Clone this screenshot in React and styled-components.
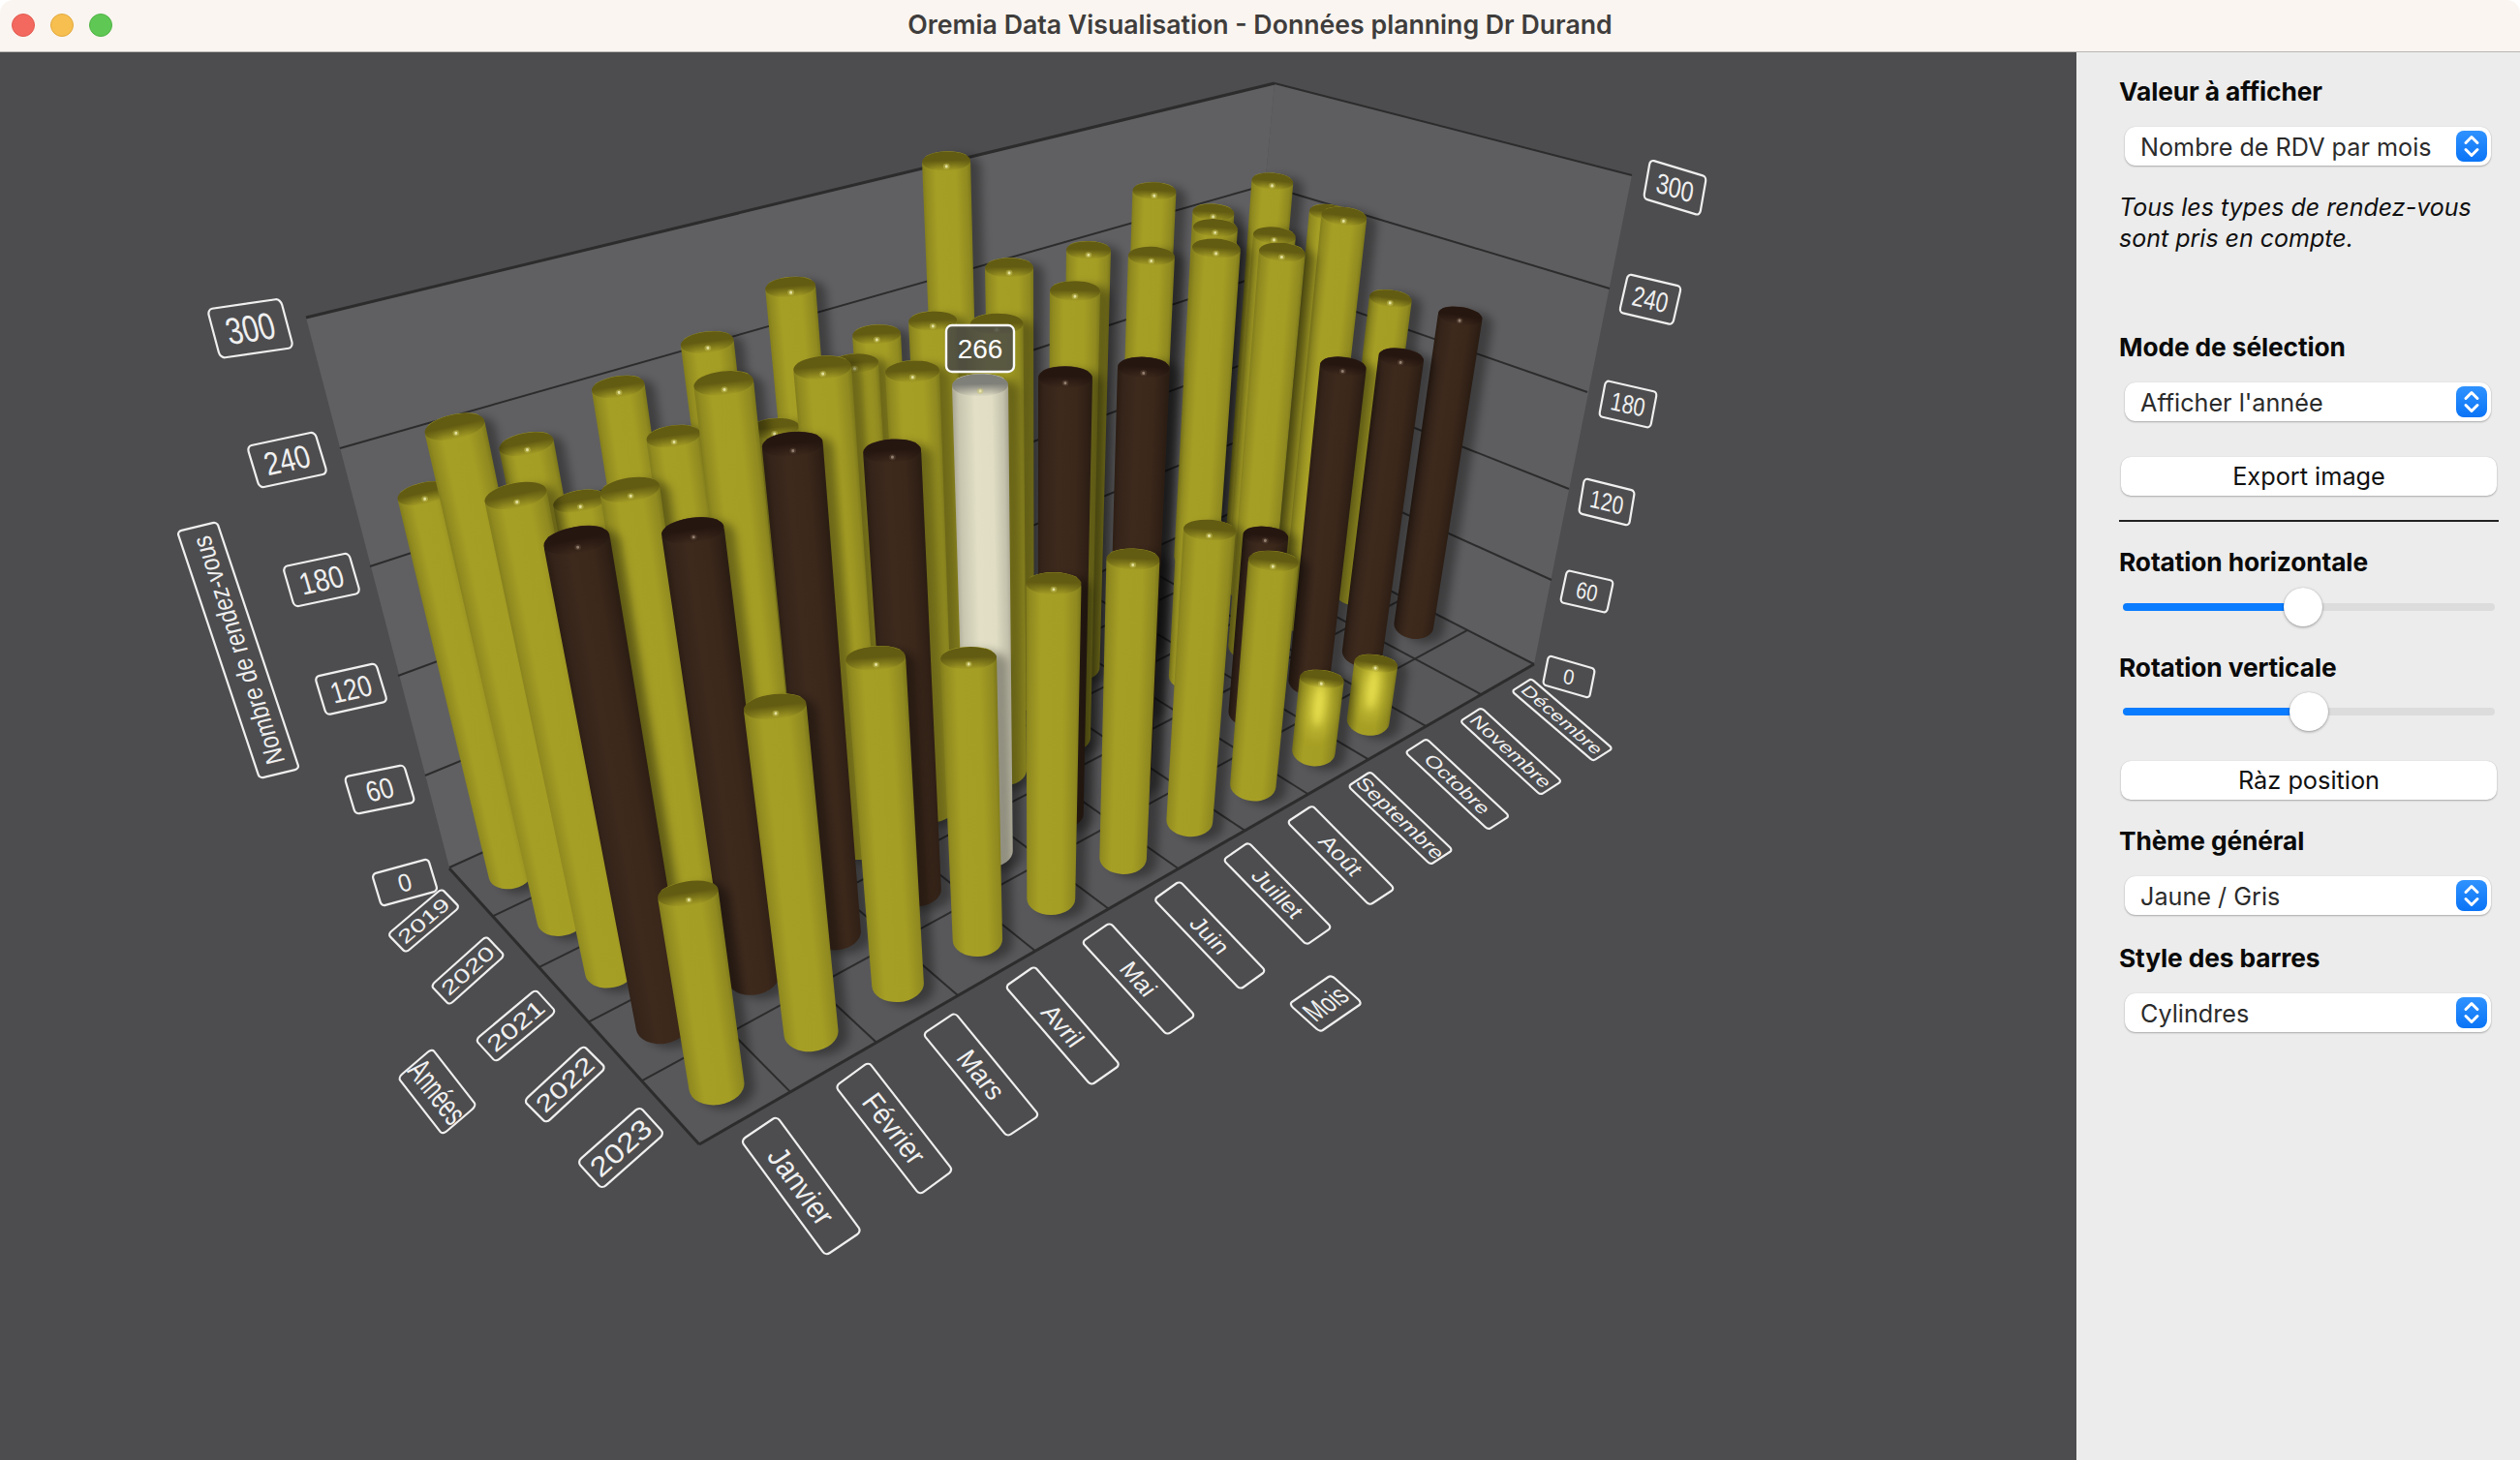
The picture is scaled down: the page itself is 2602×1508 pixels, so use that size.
import React from "react";
import styled, { createGlobalStyle } from "styled-components";

const Global = createGlobalStyle`
  html, body { margin: 0; padding: 0; background: #fff; }
  body { font-family: Inter, "Noto Sans", sans-serif; }
`;

const Window = styled.div`
  width: 2602px; height: 1508px; display: flex; flex-direction: column; overflow: hidden;
`;
const TitleBar = styled.header`
  height: 54px; flex: none; position: relative; display: flex; align-items: center; justify-content: center;
  background: #faf5f0; border-top-left-radius: 14px; border-top-right-radius: 14px; box-sizing: border-box;
  border-bottom: 1px solid #b9b7b4; padding-bottom: 3px;
`;
const Lights = styled.div`
  position: absolute; left: 12px; top: 14px; display: flex; gap: 16px;
`;
const Light = styled.span`
  width: 24px; height: 24px; border-radius: 50%; background: ${p => p.$c}; box-sizing: border-box;
  border: 1px solid ${p => p.$b};
`;
const Title = styled.h1`
  margin: 0; font: 600 26.7px/32px Inter, sans-serif; color: #3f3d3c; letter-spacing: 0;
`;
const Body = styled.main`
  flex: 1; display: flex; min-height: 0;
`;
const Stage = styled.section`
  flex: 1; min-width: 0; background: #4d4d4f; border-top: 1px solid #262626; margin-top: -1px;
  svg { display: block; }
`;
const Panel = styled.aside`
  width: 458px; flex: none; box-sizing: border-box; padding: 25px 22px 0 44px; background: #ececec;
  display: flex; flex-direction: column; align-items: stretch;
`;
const Heading = styled.h2`
  margin: ${p => p.$mt || 0}px 0 0; font: 700 26.3px/32px Inter, sans-serif; color: #0a0a0a; letter-spacing: -0.1px;
`;
const Note = styled.p`
  margin: 27px 0 0; font: italic 400 25px/32px Inter, sans-serif; color: #111;
`;
const SelectBox = styled.div`
  margin: 20px 8px 0 6px; height: 40px; box-sizing: border-box; border-radius: 11px; background: #fff;
  box-shadow: 0 1px 2px rgba(0,0,0,.28), 0 0 1px rgba(0,0,0,.15);
  display: flex; align-items: center; justify-content: space-between; padding: 0 4px 0 16px;
`;
const SelectText = styled.span`
  font: 400 25.2px/32px Inter, sans-serif; color: #2b2b2b; padding-top: 1px;
`;
const Stepper = styled.span`
  width: 32px; height: 32px; border-radius: 8px; background: linear-gradient(#2f92ff, #0a74f6);
  display: flex; align-items: center; justify-content: center;
`;
const Button = styled.div`
  margin: ${p => p.$mt}px 2px 0; height: 40px; box-sizing: border-box; border-radius: 10px; background: #fff;
  box-shadow: 0 1px 2px rgba(0,0,0,.28), 0 0 1px rgba(0,0,0,.15);
  display: flex; align-items: center; justify-content: center;
  font: 400 25.3px/32px Inter, sans-serif; color: #111;
`;
const Rule = styled.hr`
  margin: 25px 0 0; border: 0; height: 2px; background: #222;
`;
const SliderRow = styled.div`
  margin: ${p => p.$mt}px 4px 0; height: 40px; display: flex; align-items: center; position: relative;
`;
const Track = styled.div`
  flex: 1; height: 8px; border-radius: 4px; background: #dcdcdc; overflow: hidden;
`;
const Fill = styled.div`
  height: 100%; background: #0a7cff;
`;
const Thumb = styled.span`
  position: absolute; top: 0; width: 40px; height: 40px; border-radius: 50%; background: #fff;
  box-shadow: 0 1px 3px rgba(0,0,0,.35), 0 0 1px rgba(0,0,0,.2);
`;

/* ---- chart drawing ---- */
const AxisBox = styled.rect`
  fill: none; stroke: #efefef; stroke-width: 2.2; vector-effect: non-scaling-stroke;
`;
const AxisText = styled.text`
  font-family: "Liberation Sans", Arial, sans-serif; font-size: 30px; fill: #f0f0f0; text-anchor: middle;
`;
const ValueBox = styled.rect`
  fill: rgba(72,72,72,.82); stroke: #fafafa; stroke-width: 2.4;
`;
const ValueText = styled.text`
  font-family: "Liberation Sans", Arial, sans-serif; font-size: 28px; fill: #fff; text-anchor: middle;
`;

const F = [722, 1182], R = [1584, 686], B = [1275, 528], L = [464, 897];
const VP = [1073, 3240];
const homography = (() => {
  const [x0, y0] = F, [x1, y1] = R, [x2, y2] = B, [x3, y3] = L;
  const dx1 = x1 - x2, dx2 = x3 - x2, sx = x0 - x1 + x2 - x3;
  const dy1 = y1 - y2, dy2 = y3 - y2, sy = y0 - y1 + y2 - y3;
  const den = dx1 * dy2 - dx2 * dy1;
  const g = (sx * dy2 - dx2 * sy) / den, h = (dx1 * sy - sx * dy1) / den;
  const a = x1 - x0 + g * x1, b = x3 - x0 + h * x3, d = y1 - y0 + g * y1, e = y3 - y0 + h * y3;
  return (u, v) => {
    const w = g * u + h * v + 1;
    return [(a * u + b * v + x0) / w, (d * u + e * v + y0) / w];
  };
})();

const lerp = (p, q, t) => [p[0] + (q[0] - p[0]) * t, p[1] + (q[1] - p[1]) * t];
const wallFractions = [0, 0.167, 0.348, 0.547, 0.762, 1];
const leftMarks = [[464, 896], [439, 801], [411, 698], [382, 585], [351, 463], [316, 328]];
const rightMarks = [[1584, 686], [1602, 599], [1620, 505], [1639, 405], [1662, 298], [1685, 181]];
const backBottom = B, backTop = [1316, 86];
const backMarks = wallFractions.map(t => lerp(backBottom, backTop, t));

const Y = "y", D = "d", H = "h";
const bars = [
  [0, 710, 918, 63, Y], [0, 800, 725, 65, Y], [0, 904, 675, 62, Y], [0, 1000, 675, 58, Y], [0, 1088, 598, 57, Y],
  [0, 1170, 573, 55, Y], [0, 1249, 543, 54, Y], [0, 1315, 575, 52, Y], [0, 1365, 697, 46, Y, 1], [0, 1421, 681, 45, Y, 1],
  [1, 595, 553, 69, D], [1, 715, 543, 65, D], [1, 818, 454, 63, D], [1, 921, 461, 60, D], [1, 1012, 393, 58, H],
  [1, 1100, 385, 56, D], [1, 1181, 375, 54, D], [1, 1307, 549, 47, D], [1, 1387, 374, 48, D], [1, 1447, 365, 47, D], [1, 1508, 322, 46, D],
  [2, 532, 507, 65, Y], [2, 650, 501, 62, Y], [2, 747, 391, 62, Y], [2, 849, 375, 60, Y], [2, 942, 379, 56, Y], [2, 1029, 330, 55, Y],
  [2, 1110, 296, 52, Y], [2, 1189, 260, 48, Y], [2, 1256, 252, 50, Y], [2, 1324, 256, 48, Y], [2, 1388, 219, 47, Y], [2, 1436, 304, 44, Y],
  [3, 469, 436, 63, Y], [3, 598, 513, 55, Y], [3, 695, 446, 56, Y], [3, 799, 438, 52, Y], [3, 882, 371, 50, Y], [3, 963, 327, 50, Y],
  [3, 1042, 272, 50, Y], [3, 1124, 254, 46, Y], [3, 1192, 193, 45, Y], [3, 1255, 231, 46, Y], [3, 1316, 239, 44, Y], [3, 1372, 215, 40, Y],
  [4, 437, 505, 55, Y], [4, 543, 454, 57, Y], [4, 638, 395, 55, Y], [4, 730, 349, 55, Y], [4, 816, 292, 52, Y], [4, 905, 341, 50, Y],
  [4, 977, 162, 50, Y], [4, 1253, 215, 43, Y], [4, 1314, 183, 43, Y],
];

const placed = bars.map(([row, x0, y0, w, kind, glow]) => {
  const x = x0, y = y0 + 3;
  const v = (row + 0.5) / 5;
  const nx = VP[1] - y, ny = -(VP[0] - x), n = Math.hypot(nx, ny);
  let best = null, bd = 1e9;
  for (let i = -20; i <= 420; i++) {
    const p = homography(i / 400, v);
    const dist = Math.abs((p[0] - x) * nx + (p[1] - y) * ny) / n;
    if (dist < bd) { bd = dist; best = p; }
  }
  const len = Math.hypot(best[0] - x, best[1] - y);
  const scale = Math.hypot(VP[0] - best[0], VP[1] - best[1]) / Math.hypot(VP[0] - x, VP[1] - y);
  const angle = Math.atan2(best[0] - x, best[1] - y) * -180 / Math.PI;
  return { x, y, w, kind, glow, len, angle, w2: w * scale, baseY: best[1] };
}).sort((a, b) => a.baseY - b.baseY);

const Bar = ({ b }) => {
  const { w, w2, len, x, y, angle, kind, glow } = b;
  const r1 = w / 2, r2 = w2 / 2, cap = w * 0.17, foot = w2 * 0.34;
  const body = `M${-r1},${cap * 0.5} L${-r2},${len} A${r2},${foot} 0 0 0 ${r2},${len} L${r1},${cap * 0.5} Q${r1},0 ${r1 * 0.82},${-cap * 0.55} A${r1},${cap * 1.1} 0 0 0 ${-r1 * 0.82},${-cap * 0.55} Q${-r1},0 ${-r1},${cap * 0.5} Z`;
  return (
    <>
      <g transform={`translate(${x + 11} ${y + 4}) rotate(${angle})`} filter="url(#blur)">
        <path d={body} fill="#000" opacity="0.34" />
      </g>
      <g transform={`translate(${x} ${y}) rotate(${angle})`}>
        <path d={body} fill={`url(#body-${kind})`} />
        {glow && (
          <>
            <ellipse cx="0" cy={w * 0.7} rx={w * 0.38} ry={w * 0.7} fill="#d8d040" opacity="0.28" filter="url(#glow)" />
            <ellipse cx="0" cy={w * 0.62} rx={w * 0.14} ry={w * 0.5} fill="#fbf25a" opacity="0.75" filter="url(#glow)" />
          </>
        )}
        <ellipse cx="0" cy={cap * 0.18} rx={r1} ry={cap * 1.18} fill={`url(#cap-${kind})`} />
        <ellipse cx="0" cy={cap * 0.8} rx="3.4" ry="3" fill={kind === "d" ? "#6b5646" : "#d4cf6a"} opacity="0.4" />
        <ellipse cx="0" cy={cap * 0.8} rx="1.5" ry="1.6" fill={kind === "d" ? "#a08c7c" : "#ecebb0"} opacity="0.85" />
      </g>
    </>
  );
};

const labels = [
  ["300", [214, 319.5], [289.5, 308.5], [227.5, 370], 76, 40],
  ["240", [255, 461], [325, 446], [268, 504], 76, 40],
  ["180", [292, 585.5], [360, 571], [304, 627], 76, 40],
  ["120", [325, 699], [388, 685], [337, 738.5], 76, 40],
  ["60", [355.5, 802.5], [417, 790], [367, 841], 74, 40],
  ["0", [384, 903], [442, 887], [394, 936], 74, 40],
  ["Nombre de rendez-vous", [268, 804], [183, 549], [309, 794], 350, 46],
  ["300", [1704, 165], [1762, 182.5], [1697, 205], 76, 42],
  ["240", [1681, 283], [1736, 296], [1672, 322.5], 76, 42],
  ["180", [1658, 393], [1711, 405], [1651, 430], 76, 42],
  ["120", [1636, 494], [1688, 507], [1630, 530], 76, 42],
  ["60", [1618, 589], [1666, 600], [1611, 622], 74, 42],
  ["0", [1599, 677], [1647, 691], [1593, 707], 74, 42],
  ["2019", [400.5, 965], [456, 918], [419, 984], 78, 40],
  ["2020", [445, 1018], [502, 967], [464, 1038], 78, 40],
  ["2021", [491, 1074], [553, 1022], [512, 1097], 78, 40],
  ["2022", [541, 1137], [602.5, 1080], [564, 1160], 78, 40],
  ["2023", [596, 1200], [660.5, 1143], [621.5, 1228], 78, 40],
  ["Années", [446, 1083], [492, 1142], [411, 1113], 104, 40],
  ["Janvier", [802, 1153], [889.5, 1272], [765, 1178], 157, 42],
  ["Février", [897, 1097], [984, 1209], [862.5, 1122], 157, 42],
  ["Mars", [986, 1046], [1073, 1152], [953, 1068], 157, 42],
  ["Avril", [1068, 998], [1156.5, 1100], [1038, 1019], 157, 42],
  ["Mai", [1146, 953], [1234, 1049], [1117, 973], 155, 42],
  ["Juin", [1218, 910], [1307, 1003], [1191.5, 929], 155, 42],
  ["Juillet", [1289, 870], [1375, 958], [1263, 888], 150, 42],
  ["Août", [1355, 832], [1440, 918], [1329, 849], 146, 42],
  ["Septembre", [1415, 797], [1500, 878], [1392, 812], 149, 42],
  ["Octobre", [1473, 763], [1558.5, 843], [1451, 777], 149, 42],
  ["Novembre", [1529.5, 731], [1612.5, 807], [1507.6, 745], 149, 42],
  ["Décembre", [1581, 701], [1665, 773], [1561, 714], 149, 42],
  ["Mois", [1331, 1037], [1374.5, 1007], [1363, 1066], 76, 42],
];

const AxisLabel = ({ text, tl, tr, bl, w, h }) => {
  const m = [(tr[0] - tl[0]) / w, (tr[1] - tl[1]) / w, (bl[0] - tl[0]) / h, (bl[1] - tl[1]) / h, tl[0], tl[1]];
  return (
    <g transform={`matrix(${m.join(" ")})`}>
      <AxisBox x="0" y="0" width={w} height={h} rx="5" />
      <AxisText x={w / 2} y={h / 2 + 10.5}>{text}</AxisText>
    </g>
  );
};

const pts = arr => arr.map(p => p.join(",")).join(" ");
const GridLine = ({ a, b, thick }) => (
  <line x1={a[0]} y1={a[1]} x2={b[0]} y2={b[1]} stroke="#2c2c2d" strokeWidth={thick ? 3 : 2} />
);

const Grad = ({ id, stops }) => (
  <linearGradient id={id} x1="0" x2="1" y1="0" y2="0">
    {stops.map(([o, c]) => <stop key={o} offset={o} stopColor={c} />)}
  </linearGradient>
);
const CapGrad = ({ id, c }) => (
  <linearGradient id={id} x1="0" x2="0" y1="0" y2="1">
    <stop offset="0" stopColor={c} />
    <stop offset="0.45" stopColor={c} />
    <stop offset="1" stopColor={c} stopOpacity="0" />
  </linearGradient>
);

const Chart = () => (
  <svg width="2144" height="1454" viewBox="0 54 2144 1454" role="img" aria-label="Histogramme 3D">
    <defs>
      <Grad id="body-y" stops={[[0, "#837d1c"], [0.08, "#918b20"], [0.28, "#a69f25"], [0.68, "#a59e24"], [0.92, "#8f8920"], [1, "#7b761a"]]} />
      <Grad id="body-d" stops={[[0, "#2a1c13"], [0.12, "#35241a"], [0.4, "#3e2a1d"], [0.7, "#3c281b"], [1, "#2a1c13"]]} />
      <Grad id="body-h" stops={[[0, "#a8a593"], [0.12, "#c9c6b0"], [0.4, "#e2dfc6"], [0.7, "#e0ddc4"], [0.9, "#c4c1ac"], [1, "#a5a290"]]} />
      <CapGrad id="cap-y" c="#625b12" />
      <CapGrad id="cap-d" c="#251610" />
      <CapGrad id="cap-h" c="#80807a" />
      <filter id="blur" x="-40%" y="-10%" width="180%" height="120%">
        <feGaussianBlur stdDeviation="5" />
      </filter>
      <filter id="glow" x="-80%" y="-40%" width="260%" height="180%">
        <feGaussianBlur stdDeviation="4" />
      </filter>
    </defs>

    <polygon points={pts([leftMarks[5], backTop, backBottom, leftMarks[0]])} fill="#606062" />
    <polygon points={pts([backTop, rightMarks[5], rightMarks[0], backBottom])} fill="#5e5e60" />
    <polygon points={pts([F, R, B, L])} fill="#58585a" />

    {leftMarks.map((p, i) => <GridLine key={`l${i}`} a={p} b={backMarks[i]} thick={i === 5} />)}
    {rightMarks.map((p, i) => <GridLine key={`r${i}`} a={p} b={backMarks[i]} />)}
    {[1, 2, 3, 4].map(i => <GridLine key={`v${i}`} a={homography(0, i / 5)} b={homography(1, i / 5)} />)}
    {Array.from({ length: 11 }, (_, i) => (
      <GridLine key={`u${i}`} a={homography((i + 1) / 12, 0)} b={homography((i + 1) / 12, 1)} />
    ))}
    <GridLine a={F} b={R} thick />
    <GridLine a={F} b={L} thick />

    {placed.map((b, i) => <Bar key={i} b={b} />)}

    <ValueBox x="977" y="336" width="70" height="48" rx="6" />
    <ValueText x="1012" y="370">266</ValueText>

    {labels.map(([text, tl, tr, bl, w, h], i) => (
      <AxisLabel key={i} text={text} tl={tl} tr={tr} bl={bl} w={w} h={h} />
    ))}
  </svg>
);

const Select = ({ value }) => (
  <SelectBox>
    <SelectText>{value}</SelectText>
    <Stepper>
      <svg width="24" height="26" viewBox="0 0 24 26" fill="none" stroke="#fff" strokeWidth="3" strokeLinecap="round" strokeLinejoin="round">
        <path d="M6 9.5 12 3.5 18 9.5" />
        <path d="M6 16.5 12 22.5 18 16.5" />
      </svg>
    </Stepper>
  </SelectBox>
);

const Slider = ({ pct, thumb, mt }) => (
  <SliderRow $mt={mt}>
    <Track><Fill style={{ width: `${pct}%` }} /></Track>
    <Thumb style={{ left: thumb }} />
  </SliderRow>
);

export default function App() {
  return (
    <Window>
      <Global />
      <TitleBar>
        <Lights>
          <Light $c="#f4695f" $b="#e25a50" />
          <Light $c="#f7bf4f" $b="#e2a93e" />
          <Light $c="#5fc854" $b="#4fb245" />
        </Lights>
        <Title>Oremia Data Visualisation - Données planning Dr Durand</Title>
      </TitleBar>
      <Body>
        <Stage><Chart /></Stage>
        <Panel>
          <Heading>Valeur à afficher</Heading>
          <Select value="Nombre de RDV par mois" />
          <Note>Tous les types de rendez-vous<br />sont pris en compte.</Note>
          <Heading $mt={81}>Mode de sélection</Heading>
          <Select value="Afficher l'année" />
          <Button $mt={37}>Export image</Button>
          <Rule />
          <Heading $mt={26}>Rotation horizontale</Heading>
          <Slider pct={50} thumb={166} mt={10} />
          <Heading $mt={27}>Rotation verticale</Heading>
          <Slider pct={51} thumb={172} mt={9} />
          <Button $mt={31}>Ràz position</Button>
          <Heading $mt={27}>Thème général</Heading>
          <Select value="Jaune / Gris" />
          <Heading $mt={29}>Style des barres</Heading>
          <Select value="Cylindres" />
        </Panel>
      </Body>
    </Window>
  );
}
